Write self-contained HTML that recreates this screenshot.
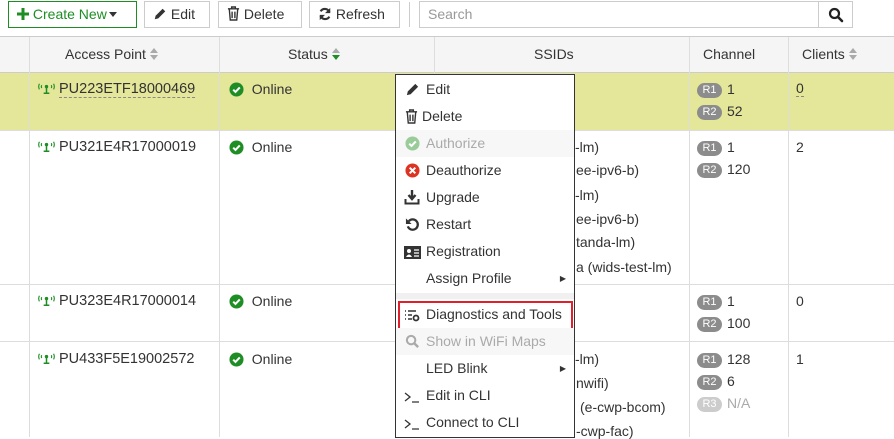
<!DOCTYPE html>
<html><head><meta charset="utf-8"><style>
*{box-sizing:border-box;margin:0;padding:0}
body{width:894px;height:437px;overflow:hidden;background:#fff;font-family:"Liberation Sans",sans-serif;font-size:14px;color:#333;position:relative}
.a{position:absolute;white-space:nowrap}
.btn{position:absolute;top:1px;height:27px;border:1px solid #ccc;background:#fff;font-size:14px;line-height:25px;padding-left:8px}
.vl{position:absolute;width:1px;background:#ddd}
.hl{position:absolute;height:1px;background:#ddd;left:0;width:894px}
.badge{display:inline-block;width:25px;height:15px;border-radius:8px;background:#8c8c8c;color:#fff;font-size:11px;line-height:15px;text-align:center;margin-right:5px;vertical-align:1px}
.mi{position:absolute;left:0;width:178px;height:27px;line-height:27px;padding-left:30px;font-size:14px;color:#333}
.ic{position:absolute;left:8px;top:0;width:16px;text-align:center}
.ic svg{vertical-align:-3px}
svg.ck{vertical-align:-3px}
svg.ant{vertical-align:-1px;margin-right:4px}
</style></head><body>
<svg width="0" height="0" style="position:absolute"><defs>
<symbol id="ck" viewBox="0 0 16 16"><circle cx="8" cy="8" r="7.5" fill="currentColor"/><path d="M4.5 8.2l2.4 2.4 4.6-4.8" fill="none" stroke="#fff" stroke-width="2.2"/></symbol>
<symbol id="ant" viewBox="0 0 18 12"><path d="M1.5 1.5q-1.5 3 0 6M4 3q-1 1.5 0 3M16.5 1.5q1.5 3 0 6M14 3q1 1.5 0 3" fill="none" stroke="currentColor" stroke-width="1.2"/><circle cx="9" cy="4.5" r="1.8" fill="currentColor"/><path d="M9 5v6M6 11.5h6" stroke="currentColor" stroke-width="1.6"/></symbol>
<symbol id="srt" viewBox="0 0 8 12"><path d="M0 5L4 0L8 5Z" fill="#aaa"/><path d="M0 7L4 12L8 7Z" fill="currentColor"/></symbol>
<symbol id="pen" viewBox="0 0 16 16"><path d="M2 14l1-4 8-8 3 3-8 8z" fill="currentColor"/><path d="M2 14l1-4 3 3z" fill="#fff" opacity=".0"/></symbol>
<symbol id="trash" viewBox="0 0 14 16"><path d="M1 3h12M5 3V1h4v2M2.5 3.5l1 11.5h7l1-11.5M5.5 6v7M8.5 6v7" fill="none" stroke="currentColor" stroke-width="1.5"/></symbol>
</defs></svg>
<!-- toolbar -->
<div class="btn" style="left:8px;width:129px;border-color:#1e8e24;color:#1e8e24"><svg width="12" height="12" viewBox="0 0 12 12" style="vertical-align:-1px"><path d="M6 0v12M0 6h12" stroke="#1e8e24" stroke-width="3"/></svg> Create New<svg width="8" height="5" viewBox="0 0 8 5" style="margin-left:2px;vertical-align:2px"><path d="M0 0h8L4 5z" fill="#333"/></svg></div>
<div class="btn" style="left:144px;width:66px"><svg width="14" height="14" style="vertical-align:-2px;color:#333"><use href="#pen"/></svg> Edit</div>
<div class="btn" style="left:218px;width:84px"><svg width="13" height="15" style="vertical-align:-2px;color:#333"><use href="#trash"/></svg> Delete</div>
<div class="btn" style="left:309px;width:91px"><svg width="14" height="14" viewBox="0 0 16 16" style="vertical-align:-2px"><path d="M13 6A5.5 5.5 0 0 0 3 5M3 10a5.5 5.5 0 0 0 10 1" fill="none" stroke="#333" stroke-width="2.4"/><path d="M14 1v6H8zM2 15V9h6z" fill="#333"/></svg> Refresh</div>
<div class="vl" style="left:409px;top:2px;height:25px;background:#ccc"></div>
<div class="btn" style="left:419px;width:400px;color:#999;padding-left:8px">Search</div>
<div class="btn" style="left:818px;width:35px;text-align:center;padding:0">
<svg width="16" height="16" viewBox="0 0 16 16" style="margin-top:5px"><circle cx="6.5" cy="6.5" r="4.5" fill="none" stroke="#222" stroke-width="2.2"/><path d="M10 10l4 4" stroke="#222" stroke-width="2.6" stroke-linecap="round"/></svg></div>
<!-- header -->
<div class="a" style="left:0;top:36px;width:894px;height:37px;background:#f5f5f5;border-top:1px solid #ccc;border-bottom:1px solid #ccc"></div>
<div class="a" style="left:65px;top:46px">Access Point <svg width="8" height="12" style="color:#aaa;vertical-align:-1px"><use href="#srt"/></svg></div>
<div class="a" style="left:288px;top:46px">Status <svg width="8" height="12" style="color:#1e8e24;vertical-align:-1px"><use href="#srt"/></svg></div>
<div class="a" style="left:534px;top:46px">SSIDs</div>
<div class="a" style="left:703px;top:46px">Channel</div>
<div class="a" style="left:802px;top:46px">Clients <svg width="8" height="12" style="color:#aaa;vertical-align:-1px"><use href="#srt"/></svg></div>
<!-- row1 yellow -->
<div class="a" style="left:0;top:73px;width:894px;height:57px;background:#e4e69a"></div>
<div class="hl" style="top:130px"></div>
<div class="hl" style="top:284px"></div>
<div class="hl" style="top:341px"></div>
<div class="vl" style="left:29px;top:37px;height:400px"></div>
<div class="vl" style="left:219px;top:37px;height:400px"></div>
<div class="vl" style="left:434px;top:37px;height:400px"></div>
<div class="vl" style="left:689px;top:37px;height:400px"></div>
<div class="vl" style="left:788px;top:37px;height:400px"></div>
<!-- AP names -->
<div class="a" style="left:38px;top:81px;font-size:14.5px"><svg class="ant" width="17" height="12" style="color:#1e8e24"><use href="#ant"/></svg><span style="border-bottom:1px dashed #888">PU223ETF18000469</span></div>
<div class="a" style="left:38px;top:139px;font-size:14.5px"><svg class="ant" width="17" height="12" style="color:#1e8e24"><use href="#ant"/></svg>PU321E4R17000019</div>
<div class="a" style="left:38px;top:293px;font-size:14.5px"><svg class="ant" width="17" height="12" style="color:#1e8e24"><use href="#ant"/></svg>PU323E4R17000014</div>
<div class="a" style="left:38px;top:351px;font-size:14.5px"><svg class="ant" width="17" height="12" style="color:#1e8e24"><use href="#ant"/></svg>PU433F5E19002572</div>
<div class="a" style="left:229px;top:81px"><svg class="ck" width="15" height="15" style="color:#1e8e24"><use href="#ck"/></svg>&nbsp; Online</div>
<div class="a" style="left:229px;top:139px"><svg class="ck" width="15" height="15" style="color:#1e8e24"><use href="#ck"/></svg>&nbsp; Online</div>
<div class="a" style="left:229px;top:293px"><svg class="ck" width="15" height="15" style="color:#1e8e24"><use href="#ck"/></svg>&nbsp; Online</div>
<div class="a" style="left:229px;top:351px"><svg class="ck" width="15" height="15" style="color:#1e8e24"><use href="#ck"/></svg>&nbsp; Online</div>
<!-- SSID fragments -->
<div class="a" style="left:575px;top:139px">-lm)</div>
<div class="a" style="left:576px;top:162px">ee-ipv6-b)</div>
<div class="a" style="left:575px;top:187px">-lm)</div>
<div class="a" style="left:576px;top:211px">ee-ipv6-b)</div>
<div class="a" style="left:576px;top:234px">tanda-lm)</div>
<div class="a" style="left:576px;top:259px">a (wids-test-lm)</div>
<div class="a" style="left:575px;top:351px">-lm)</div>
<div class="a" style="left:576px;top:375px">nwifi)</div>
<div class="a" style="left:580px;top:399px">(e-cwp-bcom)</div>
<div class="a" style="left:576px;top:423px">-cwp-fac)</div>
<!-- channel -->
<div class="a" style="left:697px;top:81px"><span class="badge">R1</span>1</div>
<div class="a" style="left:697px;top:103px"><span class="badge">R2</span>52</div>
<div class="a" style="left:697px;top:139px"><span class="badge">R1</span>1</div>
<div class="a" style="left:697px;top:161px"><span class="badge">R2</span>120</div>
<div class="a" style="left:697px;top:293px"><span class="badge">R1</span>1</div>
<div class="a" style="left:697px;top:315px"><span class="badge">R2</span>100</div>
<div class="a" style="left:697px;top:351px"><span class="badge">R1</span>128</div>
<div class="a" style="left:697px;top:373px"><span class="badge">R2</span>6</div>
<div class="a" style="left:697px;top:395px;color:#aaa"><span class="badge" style="background:#ccc">R3</span>N/A</div>
<div class="a" style="left:796px;top:81px;border-bottom:1px dashed #888;line-height:15px">0</div>
<div class="a" style="left:796px;top:139px">2</div>
<div class="a" style="left:796px;top:293px">0</div>
<div class="a" style="left:796px;top:351px">1</div>
<!-- context menu -->
<div class="a" style="left:395px;top:74px;width:180px;height:364px;background:#fff;border:1px solid #333;overflow:hidden">
<div class="mi" style="top:1px"><span class="ic"><svg width="15" height="15" style="color:#333"><use href="#pen"/></svg></span>Edit</div>
<div class="mi" style="top:28px;padding-left:26px"><span class="ic" style="left:7px"><svg width="13" height="15" style="color:#333"><use href="#trash"/></svg></span>Delete</div>
<div class="mi" style="top:55px;background:#f7f7f7;color:#aaa"><span class="ic"><svg width="15" height="15" style="color:#9c9"><use href="#ck"/></svg></span>Authorize</div>
<div class="mi" style="top:82px"><span class="ic"><svg width="15" height="15" viewBox="0 0 16 16"><circle cx="8" cy="8" r="7.5" fill="#d32"/><path d="M5 5l6 6M11 5l-6 6" stroke="#fff" stroke-width="2.2"/></svg></span>Deauthorize</div>
<div class="mi" style="top:109px"><span class="ic"><svg width="16" height="16" viewBox="0 0 16 16"><path d="M8 1v8M4.5 6l3.5 4 3.5-4" fill="none" stroke="#333" stroke-width="2.4"/><path d="M1.5 10v4.5h13V10" fill="none" stroke="#333" stroke-width="2"/></svg></span>Upgrade</div>
<div class="mi" style="top:136px"><span class="ic"><svg width="15" height="15" viewBox="0 0 16 16"><path d="M4 4.5A5.5 5.5 0 1 1 3 10" fill="none" stroke="#333" stroke-width="2.4"/><path d="M1 1.5v6h6z" fill="#333"/></svg></span>Restart</div>
<div class="mi" style="top:163px"><span class="ic"><svg width="17" height="13" viewBox="0 0 17 13"><rect width="17" height="13" fill="#333"/><circle cx="5" cy="5" r="2" fill="#fff"/><path d="M2 11q3-5 6 0z" fill="#fff"/><path d="M10 4h5M10 7h5M10 10h5" stroke="#fff" stroke-width="1.3"/></svg></span>Registration</div>
<div class="mi" style="top:190px">Assign Profile<span style="position:absolute;right:8px;font-size:8px">▶</span></div>
<div style="position:absolute;left:0;top:218px;width:178px;height:6px;background:#f0f0f0"></div>
<div class="mi" style="top:226px"><span class="ic"><svg width="16" height="13" viewBox="0 0 16 13"><path d="M1 2h1M4 2h8M1 6h1M4 6h4M1 10h1M4 10h4" stroke="#333" stroke-width="1.4"/><circle cx="12" cy="9" r="2.5" fill="none" stroke="#333" stroke-width="1.8"/></svg></span>Diagnostics and Tools</div>
<div style="position:absolute;left:2px;top:226px;width:175px;height:30px;border:2px solid #e0202a"></div>
<div class="mi" style="top:253px;background:#f7f7f7;color:#aaa"><span class="ic">
<svg width="15" height="15" viewBox="0 0 16 16"><circle cx="6.5" cy="6.5" r="4.5" fill="none" stroke="#aaa" stroke-width="2.2"/><path d="M10 10l4 4" stroke="#aaa" stroke-width="2.6"/></svg></span>Show in WiFi Maps</div>
<div class="mi" style="top:280px">LED Blink<span style="position:absolute;right:8px;font-size:8px">▶</span></div>
<div class="mi" style="top:307px"><span class="ic"><svg width="16" height="12" viewBox="0 0 16 12"><path d="M1 2l5 4-5 4M8 11h7" fill="none" stroke="#333" stroke-width="1.3"/></svg></span>Edit in CLI</div>
<div class="mi" style="top:334px"><span class="ic"><svg width="16" height="12" viewBox="0 0 16 12"><path d="M1 2l5 4-5 4M8 11h7" fill="none" stroke="#333" stroke-width="1.3"/></svg></span>Connect to CLI</div>
</div>
</body></html>
